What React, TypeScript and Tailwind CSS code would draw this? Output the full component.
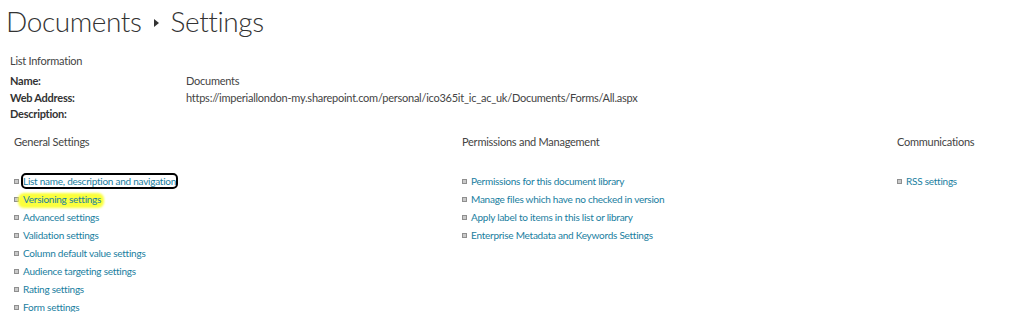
import React from "react";

const font = { fontFamily: 'Lato, "Open Sans", sans-serif' };

function Bullet() {
  return <span className="inline-block w-[5px] h-[5px] bg-[#c9c9c9] border border-[#8f8f8f] mr-[4px] shrink-0" />;
}

function LinkItem({ text, focus, highlight }: { text: string; focus?: boolean; highlight?: boolean }) {
  return (
    <li className="flex items-center h-[18px]">
      <Bullet />
      <span className="relative">
        {highlight && (
          <span className="absolute left-[-5px] right-[-3px] top-[1px] bottom-[-1px] bg-[#fbff3c] rounded-[6px] blur-[1px]" />
        )}
        <a
          className={
            "relative text-[#197ea0] " +
            (focus ? "outline-2 outline-black outline-offset-[0px] rounded-[3px]" : "")
          }
        >
          {text}
        </a>
      </span>
    </li>
  );
}

function Column({ title, items, className }: { title: string; items: { t: string; f?: boolean; h?: boolean }[]; className?: string }) {
  return (
    <div className={className}>
      <div className="text-[#444] h-[18px] pl-[4px]">{title}</div>
      <ul className="mt-[21px] pl-[4px] text-[10px]">
        {items.map((i) => (
          <LinkItem key={i.t} text={i.t} focus={i.f} highlight={i.h} />
        ))}
      </ul>
    </div>
  );
}

export default function App() {
  return (
    <div className="w-[1024px] h-[312px] bg-white overflow-hidden text-[11px] tracking-[-0.25px]" style={font}>
      <div className="pl-[6px] pt-[1px] flex items-center text-[28px] font-light text-[#333] leading-[40px] tracking-[-0.4px]">
        <span>Documents</span>
        <span className="mx-[12px] inline-block w-0 h-0 border-y-[4px] border-y-transparent border-l-[5px] border-l-[#333] mt-[4px]" />
        <span>Settings</span>
      </div>
      <div className="pl-[10px] mt-[12px] text-[#444]">
        <div className="h-[17px]">List Information</div>
        <div className="mt-[3px] grid grid-cols-[176px_1fr] leading-[16.5px]">
          <div className="font-bold text-[#333]">Name:</div>
          <div>Documents</div>
          <div className="font-bold text-[#333]">Web Address:</div>
          <div>https://imperiallondon-my.sharepoint.com/personal/ico365it_ic_ac_uk/Documents/Forms/All.aspx</div>
          <div className="font-bold text-[#333]">Description:</div>
          <div></div>
        </div>
      </div>
      <div className="flex mt-[11px] pl-[10px]">
        <Column
          className="w-[448px]"
          title="General Settings"
          items={[
            { t: "List name, description and navigation", f: true },
            { t: "Versioning settings", h: true },
            { t: "Advanced settings" },
            { t: "Validation settings" },
            { t: "Column default value settings" },
            { t: "Audience targeting settings" },
            { t: "Rating settings" },
            { t: "Form settings" },
          ]}
        />
        <Column
          className="w-[435px]"
          title="Permissions and Management"
          items={[
            { t: "Permissions for this document library" },
            { t: "Manage files which have no checked in version" },
            { t: "Apply label to items in this list or library" },
            { t: "Enterprise Metadata and Keywords Settings" },
          ]}
        />
        <Column title="Communications" items={[{ t: "RSS settings" }]} />
      </div>
    </div>
  );
}
